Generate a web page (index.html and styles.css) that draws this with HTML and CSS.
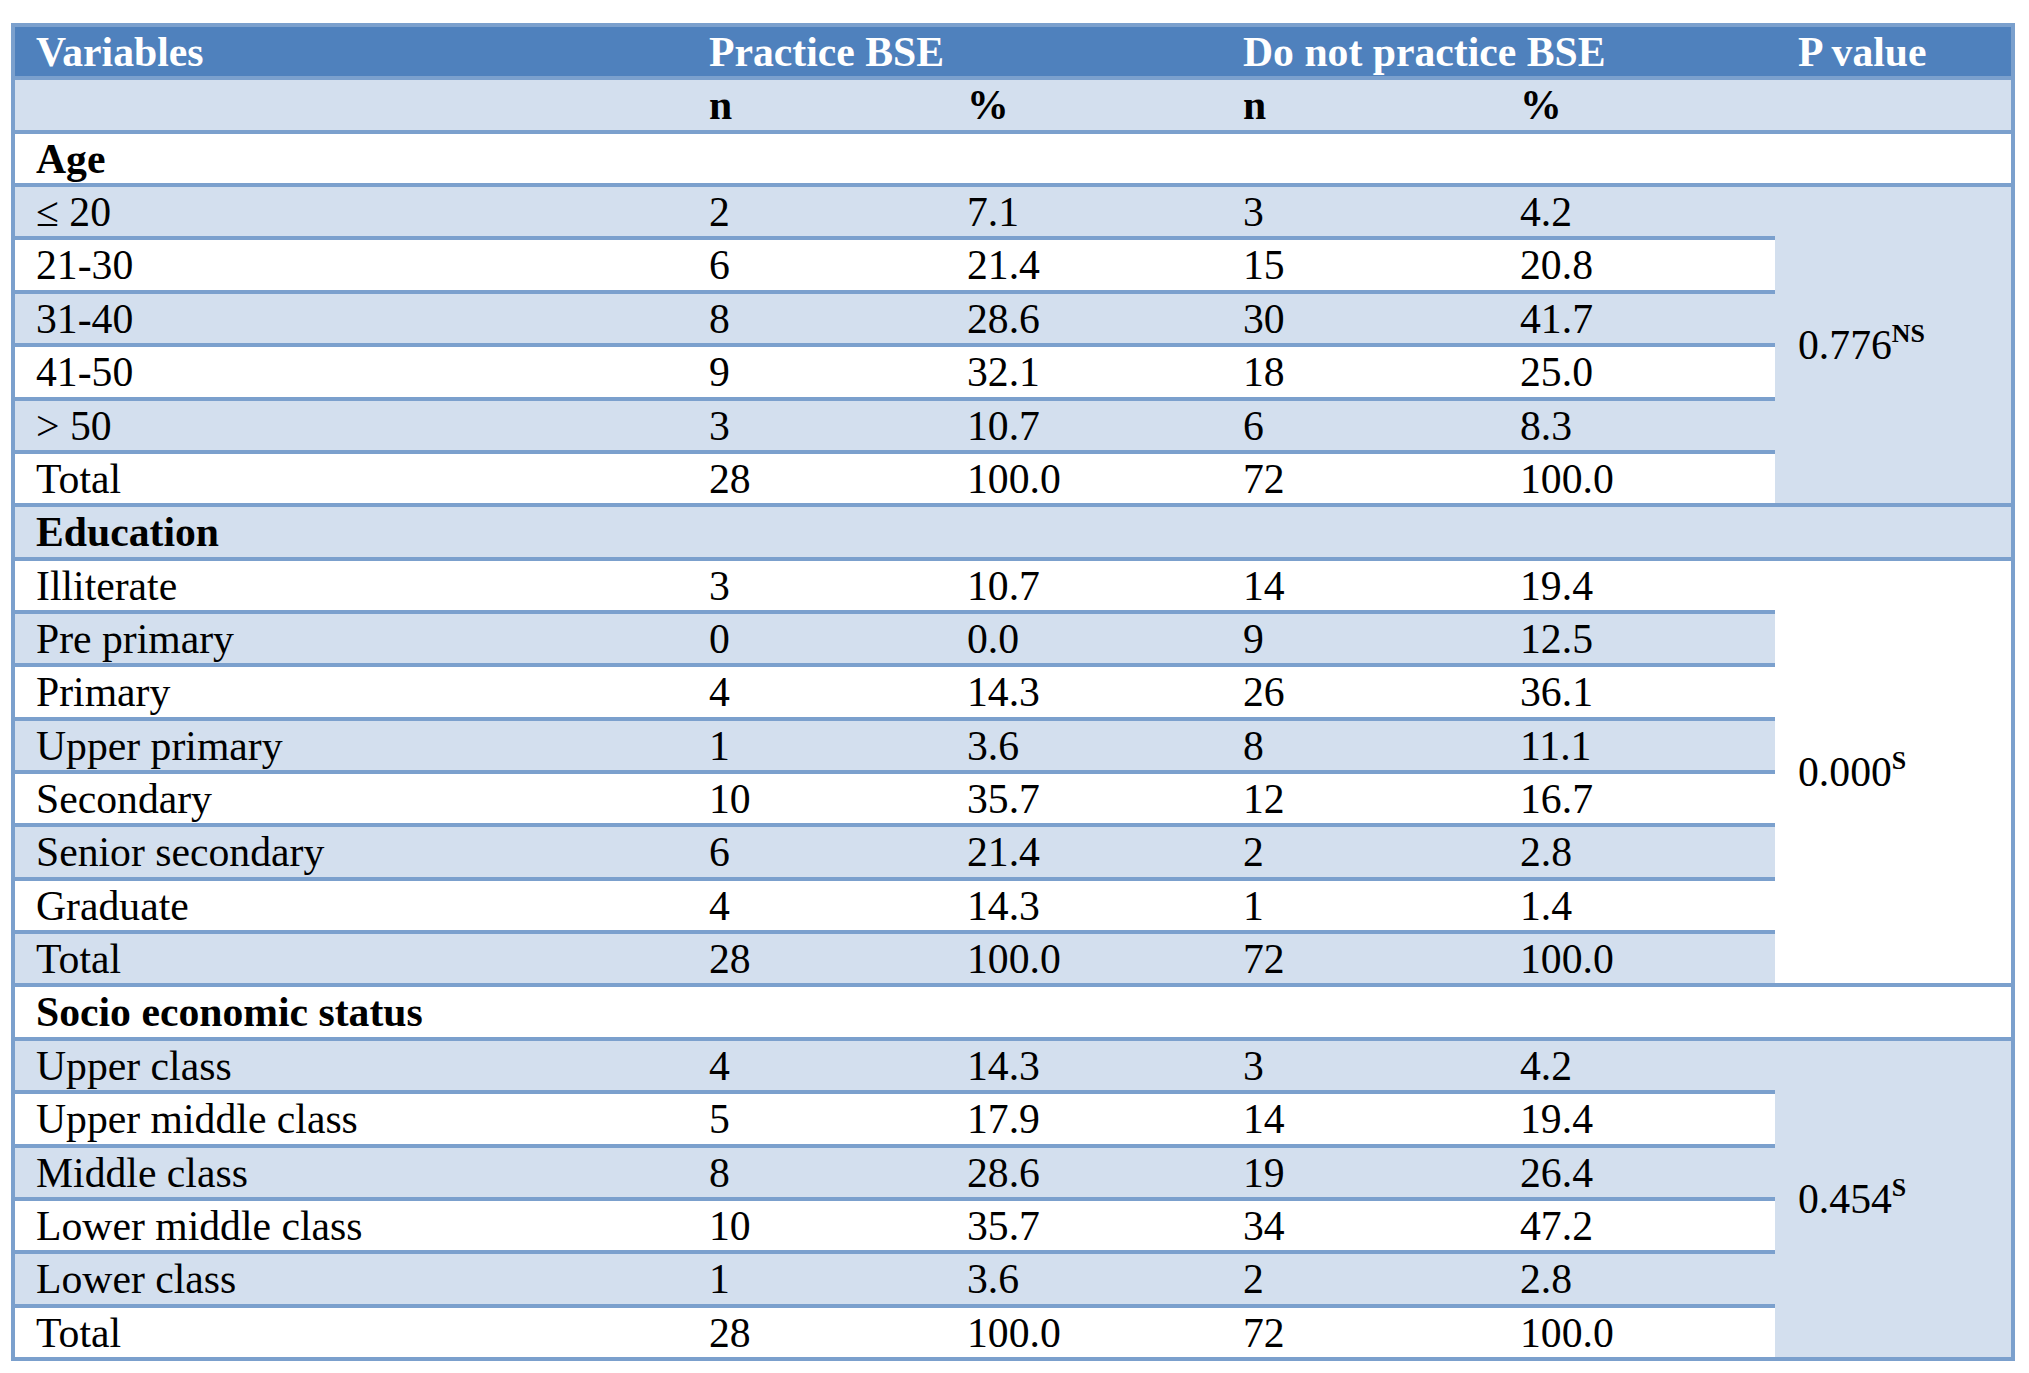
FILE: index.html
```html
<!DOCTYPE html>
<html>
<head>
<meta charset="utf-8">
<link rel="stylesheet" href="styles.css">
</head>
<body>
<table class="bse">
  <colgroup>
    <col class="c1"><col class="c2"><col class="c3"><col class="c4"><col class="c5"><col class="c6">
  </colgroup>
  <tr class="head">
    <td class="first">Variables</td><td colspan="2">Practice BSE</td><td colspan="2">Do not practice BSE</td><td class="p">P value</td>
  </tr>
  <tr class="band sub">
    <td class="first"></td><td>n</td><td>%</td><td>n</td><td>%</td><td class="p"></td>
  </tr>
  <tr class="sec"><td class="first" colspan="6">Age</td></tr>
  <tr class="band"><td class="first">≤ 20</td><td>2</td><td>7.1</td><td>3</td><td>4.2</td><td class="p band" rowspan="6">0.776<sup>NS</sup></td></tr>
  <tr><td class="first">21-30</td><td>6</td><td>21.4</td><td>15</td><td>20.8</td></tr>
  <tr class="band"><td class="first">31-40</td><td>8</td><td>28.6</td><td>30</td><td>41.7</td></tr>
  <tr><td class="first">41-50</td><td>9</td><td>32.1</td><td>18</td><td>25.0</td></tr>
  <tr class="band"><td class="first">&gt; 50</td><td>3</td><td>10.7</td><td>6</td><td>8.3</td></tr>
  <tr><td class="first">Total</td><td>28</td><td>100.0</td><td>72</td><td>100.0</td></tr>
  <tr class="sec band"><td class="first" colspan="6">Education</td></tr>
  <tr><td class="first">Illiterate</td><td>3</td><td>10.7</td><td>14</td><td>19.4</td><td class="p" rowspan="8">0.000<sup>S</sup></td></tr>
  <tr class="band"><td class="first">Pre primary</td><td>0</td><td>0.0</td><td>9</td><td>12.5</td></tr>
  <tr><td class="first">Primary</td><td>4</td><td>14.3</td><td>26</td><td>36.1</td></tr>
  <tr class="band"><td class="first">Upper primary</td><td>1</td><td>3.6</td><td>8</td><td>11.1</td></tr>
  <tr><td class="first">Secondary</td><td>10</td><td>35.7</td><td>12</td><td>16.7</td></tr>
  <tr class="band"><td class="first">Senior secondary</td><td>6</td><td>21.4</td><td>2</td><td>2.8</td></tr>
  <tr><td class="first">Graduate</td><td>4</td><td>14.3</td><td>1</td><td>1.4</td></tr>
  <tr class="band"><td class="first">Total</td><td>28</td><td>100.0</td><td>72</td><td>100.0</td></tr>
  <tr class="sec"><td class="first" colspan="6">Socio economic status</td></tr>
  <tr class="band"><td class="first">Upper class</td><td>4</td><td>14.3</td><td>3</td><td>4.2</td><td class="p band" rowspan="6">0.454<sup>S</sup></td></tr>
  <tr><td class="first">Upper middle class</td><td>5</td><td>17.9</td><td>14</td><td>19.4</td></tr>
  <tr class="band"><td class="first">Middle class</td><td>8</td><td>28.6</td><td>19</td><td>26.4</td></tr>
  <tr><td class="first">Lower middle class</td><td>10</td><td>35.7</td><td>34</td><td>47.2</td></tr>
  <tr class="band"><td class="first">Lower class</td><td>1</td><td>3.6</td><td>2</td><td>2.8</td></tr>
  <tr><td class="first">Total</td><td>28</td><td>100.0</td><td>72</td><td>100.0</td></tr>
</table>
</body>
</html>
```

FILE: styles.css
```css
html, body {
  margin: 0;
  padding: 0;
  background: #ffffff;
}

.bse {
  margin: 23px 0 0 11px;
  width: 2004px;
  table-layout: fixed;
  border-collapse: separate;
  border-spacing: 0;
  border: 4px solid #7ba0cd;
  font-family: "Liberation Serif", "Times New Roman", serif;
  font-size: 41.7px;
  color: #000000;
  background: #ffffff;
}

.c1 { width: 675px; }
.c2 { width: 258px; }
.c3 { width: 276px; }
.c4 { width: 277px; }
.c5 { width: 274px; }
.c6 { width: 236px; }

.bse td {
  box-sizing: border-box;
  padding: 2px 0 0 19px;
  height: 53.36px;
  line-height: 47.36px;
  border-top: 4px solid #7ba0cd;
  vertical-align: middle;
  white-space: nowrap;
  text-align: left;
}

.bse td.first {
  padding-left: 21px;
}

.bse td.p {
  padding-left: 23px;
}

.bse tr.head td {
  border-top: none;
  height: 49.36px;
  background: #4f81bd;
  color: #ffffff;
  font-weight: bold;
}

.bse tr.sub td {
  font-weight: bold;
}

.bse tr.band td,
.bse td.band {
  background: #d3dfee;
}

.bse tr.sec td {
  font-weight: bold;
}

.bse sup {
  font-size: 0.62em;
  font-weight: bold;
  line-height: 0;
  vertical-align: 0.66em;
}
```
